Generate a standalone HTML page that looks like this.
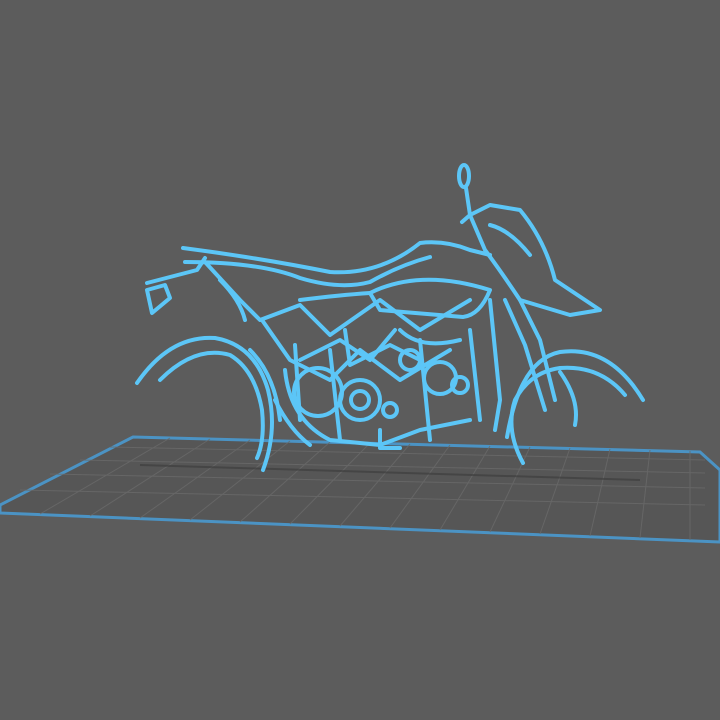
<!DOCTYPE html><html><head><style>html,body{margin:0;padding:0;background:#5c5c5c;width:720px;height:720px;overflow:hidden}</style></head><body>
<svg width="720" height="720" viewBox="0 0 720 720" xmlns="http://www.w3.org/2000/svg">
<rect width="720" height="720" fill="#5c5c5c"/>
<polygon points="133,437 700,452 720,470 720,542 0,513 0,505" fill="#565656" stroke="#4b93c4" stroke-width="3"/>
<g stroke="#6a6a6a" stroke-width="1" opacity="0.8">
<line x1="20" y1="490" x2="705" y2="505"/><line x1="50" y1="474" x2="705" y2="488"/><line x1="80" y1="460" x2="705" y2="473"/><line x1="110" y1="447" x2="705" y2="460"/>
<line x1="170" y1="438" x2="40" y2="514"/><line x1="210" y1="439" x2="90" y2="516"/><line x1="250" y1="440" x2="140" y2="518"/><line x1="290" y1="441" x2="190" y2="520"/><line x1="330" y1="442" x2="240" y2="522"/><line x1="370" y1="443" x2="290" y2="524"/><line x1="410" y1="444" x2="340" y2="526"/><line x1="450" y1="445" x2="390" y2="528"/><line x1="490" y1="446" x2="440" y2="530"/><line x1="530" y1="447" x2="490" y2="532"/><line x1="570" y1="448" x2="540" y2="534"/><line x1="610" y1="449" x2="590" y2="536"/><line x1="650" y1="450" x2="640" y2="538"/><line x1="690" y1="451" x2="690" y2="540"/>
</g>
<line x1="140" y1="465" x2="640" y2="480" stroke="#3a3a3a" stroke-width="2" opacity="0.6"/>
<g fill="none" stroke-linecap="round" stroke-linejoin="round">
<g id="bike" stroke="#5cc6f7" stroke-width="4">
<!-- rear wheel fins -->
<path d="M137 383 Q170 335 215 338 Q255 345 268 390 Q278 430 263 470"/>
<path d="M160 380 Q195 345 230 355 Q255 370 262 410 Q265 440 257 458"/>
<path d="M250 350 Q275 375 280 420"/>
<!-- front wheel -->
<path d="M507 437 Q520 360 560 352 Q610 345 643 400"/>
<path d="M523 463 Q505 430 515 400 Q530 372 560 368 Q600 365 625 395"/>
<path d="M560 372 Q580 400 575 425"/>
<!-- seat / rear frame -->
<path d="M183 248 Q260 258 330 272 Q380 275 420 243 Q445 240 470 250 L490 255"/>
<path d="M185 262 Q260 262 300 278 Q340 290 370 282 Q400 265 430 257"/>
<path d="M147 283 L197 270 L205 258"/>
<path d="M147 290 L165 285 L170 298 L152 313 Z"/>
<path d="M205 262 L240 300 L260 320 L300 305 L330 335 L380 300 L420 330 L470 300"/>
<path d="M220 280 Q240 300 245 320"/>
<path d="M262 320 L290 360 L330 380 L360 350 L400 380 L450 350"/>
<!-- tank -->
<path d="M370 293 Q420 268 490 290 Q480 315 463 317 L380 310 Z"/>
<path d="M300 300 Q340 295 370 293"/>
<!-- engine -->
<circle cx="360" cy="400" r="20"/><circle cx="360" cy="400" r="9"/>
<circle cx="318" cy="392" r="24"/><circle cx="440" cy="378" r="16"/><circle cx="460" cy="385" r="8"/>
<circle cx="410" cy="360" r="10"/><circle cx="390" cy="410" r="7"/>
<path d="M285 370 Q290 420 330 440 L380 445 L420 430 L470 420"/>
<path d="M295 345 L300 420 M330 350 L340 440 M470 330 L480 420 M420 340 L430 440"/>
<path d="M345 330 L350 365 L390 345 L420 360"/>
<path d="M300 360 L340 340 L370 360 L395 330"/>
<path d="M275 400 Q290 430 310 445"/>
<path d="M380 430 L380 448 L400 448"/>
<path d="M400 330 Q420 350 460 340"/>
<!-- front -->
<path d="M470 215 L490 205 L520 210 Q545 240 555 280 L600 310 L570 315 L520 300 Q500 270 485 250 Z"/>
<path d="M490 225 Q510 230 530 255"/>
<ellipse cx="464" cy="176" rx="5" ry="11"/>
<path d="M466 188 L470 215 L462 222"/>
<path d="M505 300 L525 345 L545 410"/>
<path d="M520 300 L540 340 L555 400"/>
<path d="M490 300 L500 400 L495 430"/>
</g>
</g>
</svg></body></html>
